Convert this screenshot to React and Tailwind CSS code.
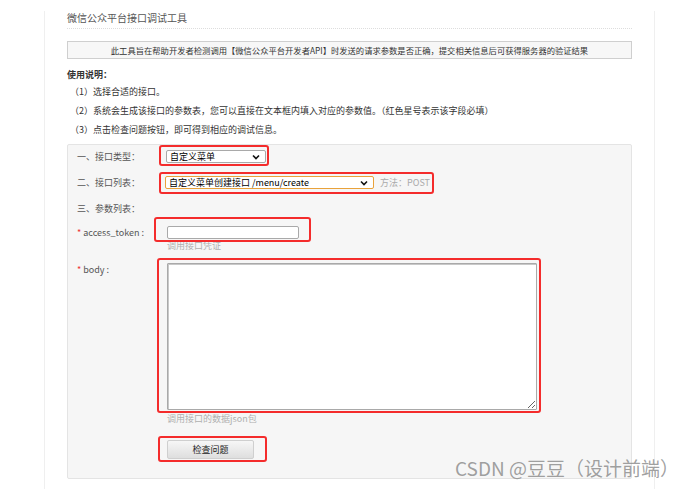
import React from 'react'

const font = { fontFamily: '"Noto Sans CJK SC", "Liberation Sans", sans-serif' }

// red annotation frame laid over a control
const Mark = ({ className }) => (
  <div className={`pointer-events-none absolute rounded-[3px] border-2 border-[#f42c2c] ${className}`} />
)

const Chevron = () => (
  <svg width="8" height="6" viewBox="0 0 8 6" className="absolute right-[5px] top-1/2 -translate-y-1/2">
    <polyline points="1,1.5 4,4.5 7,1.5" fill="none" stroke="#111" strokeWidth="1.6" />
  </svg>
)

const FakeSelect = ({ value, width, focus }) => (
  <div
    className={`relative h-[13px] rounded-[2px] bg-white pl-[3px] text-[9px] leading-[11px] text-black ${
      focus ? 'border border-[#e9a23b]' : 'border border-[#a9a9a9]'
    }`}
    style={{ width }}
  >
    {value}
    <Chevron />
  </div>
)

export default function App() {
  return (
    <div className="relative h-[489px] w-[693px] overflow-hidden bg-white pt-[8px]" style={font}>
      <div className="ml-[44px] h-[481px] w-[611px] border-x border-[#efefef] pl-[22px]">
        <div className="w-[565px]">
          {/* title */}
          <div className="border-b border-dotted border-[#ddd] pb-[3px]">
            <div className="mt-[3px] h-[14px] text-[10px] leading-[14px] text-[#555]">微信公众平台接口调试工具</div>
          </div>

          {/* notice */}
          <div className="mt-[12px] flex h-[18px] items-center justify-center border border-[#cfcfcf] bg-[#f7f7f7] text-[8.3px] text-[#333]">
            此工具旨在帮助开发者检测调用【微信公众平台开发者API】时发送的请求参数是否正确，提交相关信息后可获得服务器的验证结果
          </div>

          {/* usage */}
          <div className="mt-[10px] h-[12px] text-[9px] font-bold leading-[12px] text-[#333]">使用说明：</div>
          <div className="mt-[1px] pl-[3px] text-[9px] leading-[19px] text-[#333]">
            <div>（1）选择合适的接口。</div>
            <div>（2）系统会生成该接口的参数表，您可以直接在文本框内填入对应的参数值。（红色星号表示该字段必填）</div>
            <div>（3）点击检查问题按钮，即可得到相应的调试信息。</div>
          </div>

          {/* form panel */}
          <div className="mt-[5px] rounded-[2px] border border-[#e4e4e4] bg-[#f6f6f6] pb-[19px] pl-[9px] text-[9px] text-[#555]">
            <div className="mt-[5px] flex h-[13px] items-center">
              <div className="w-[89px] leading-[13px]">一、接口类型：</div>
              <div className="relative">
                <FakeSelect value="自定义菜单" width={100} />
                <Mark className="-left-[7px] -right-[3px] -top-[5px] -bottom-[3px]" />
              </div>
            </div>

            <div className="mt-[13px] flex h-[13px] items-center">
              <div className="w-[88px] leading-[13px]">二、接口列表：</div>
              <div className="relative flex items-center gap-[6px]">
                <FakeSelect value="自定义菜单创建接口 /menu/create" width={209} focus />
                <span className="text-[#aaa]">方法：POST</span>
                <Mark className="-left-[6px] -right-[4px] -top-[4px] -bottom-[5px]" />
              </div>
            </div>

            <div className="mt-[13px] h-[13px] leading-[13px]">三、参数列表：</div>

            <div className="mt-[11px] flex h-[13px] items-center">
              <div className="w-[90px] leading-[13px]">
                <span className="text-[#e33]">*</span> access_token :
              </div>
              <div className="relative">
                <div className="h-[13px] w-[132px] rounded-[2px] border border-[#a9a9a9] bg-white" />
                <Mark className="-left-[13px] -right-[12px] -top-[9px] -bottom-[3px]" />
              </div>
            </div>
            <div className="mt-[1px] h-[12px] pl-[90px] leading-[12px] text-[#b0b0b0]">调用接口凭证</div>

            <div className="mt-[11px] flex items-start">
              <div className="w-[90px] leading-[13px]">
                <span className="text-[#e33]">*</span> body :
              </div>
              <div className="relative">
                <textarea className="block h-[147px] w-[370px] resize rounded-[1px] border border-[#a9a9a9] bg-white shadow-[inset_1px_1px_0_#c8c8c8] outline-none" />
                <Mark className="-left-[10px] -right-[4px] -top-[5px] -bottom-[3px]" />
              </div>
            </div>
            <div className="mt-[3px] h-[12px] pl-[90px] leading-[12px] text-[#b0b0b0]">调用接口的数据json包</div>

            <div className="mt-[15px] pl-[90px]">
              <div className="relative w-[87px]">
                <button className="h-[19px] w-[87px] rounded-[2px] border border-[#cfcfcf] bg-gradient-to-b from-[#f7f7f7] to-[#dedede] text-[9px] text-[#222]">
                  检查问题
                </button>
                <Mark className="-left-[9px] -right-[13px] -top-[4px] -bottom-[3px]" />
              </div>
            </div>
          </div>
        </div>
      </div>

      {/* watermark */}
      <div className="absolute bottom-[9px] right-[14px] text-[19px] leading-[24px] text-[#8f8f8f]/85">
        CSDN @豆豆（设计前端）
      </div>
    </div>
  )
}
